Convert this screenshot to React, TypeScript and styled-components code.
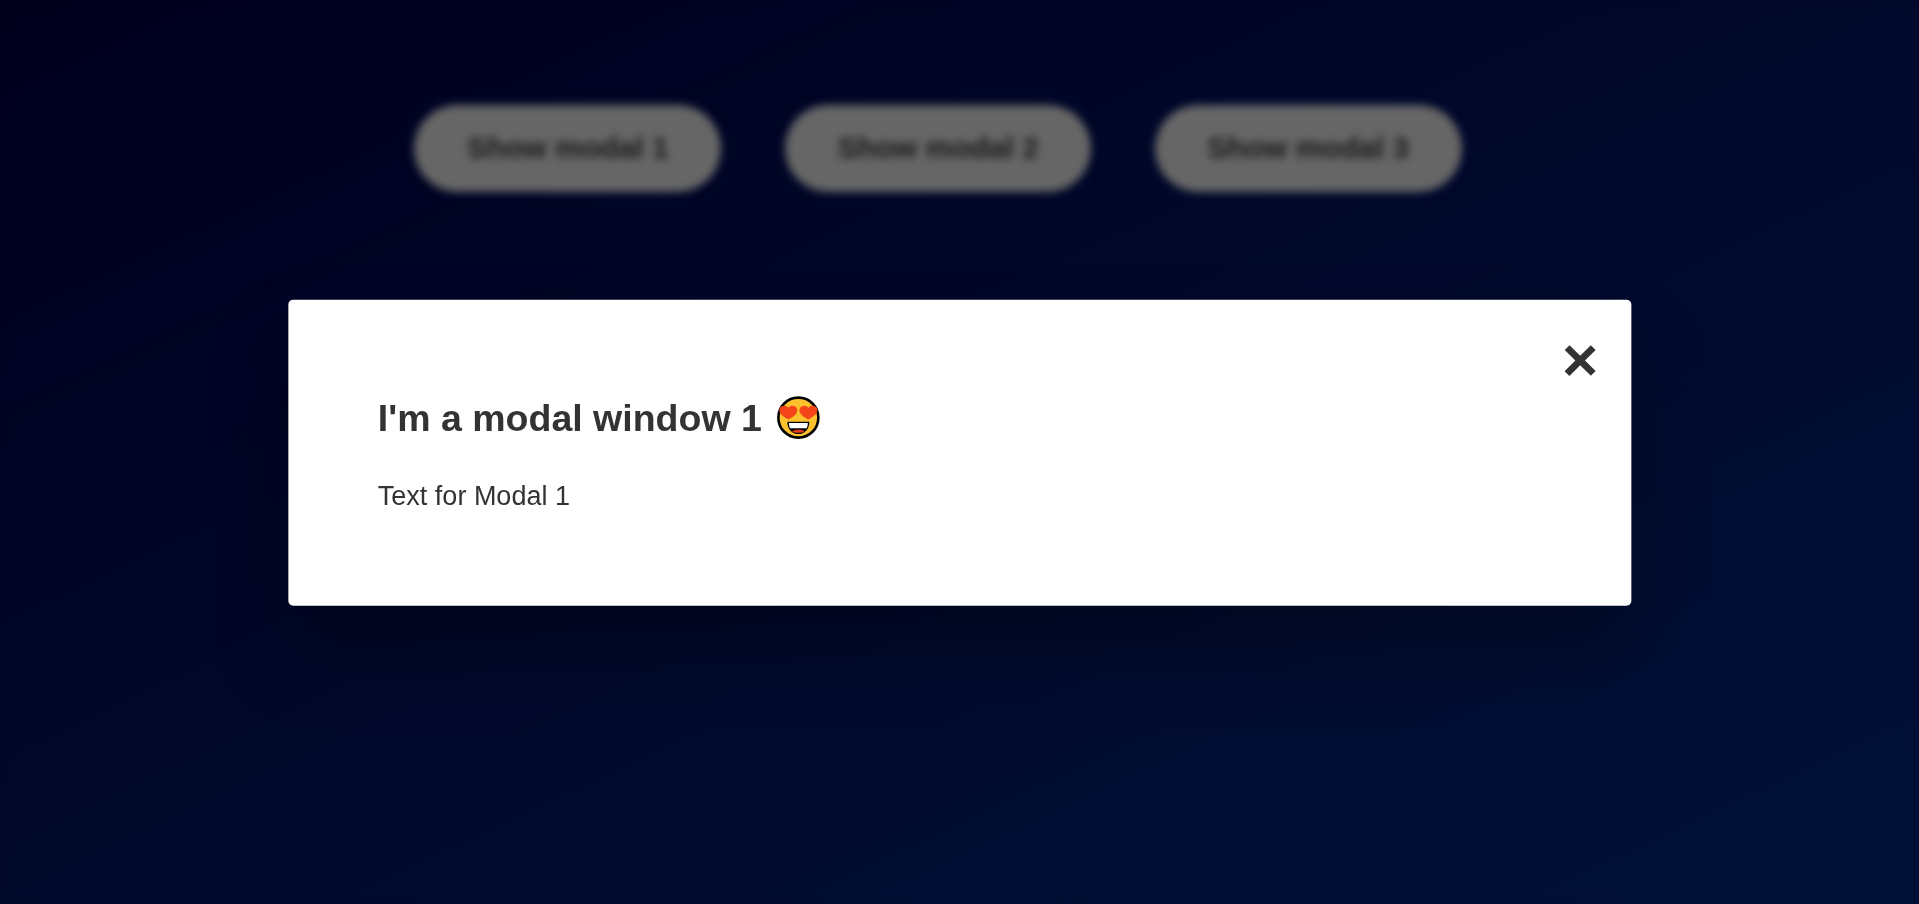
import React from "react";
import styled, { createGlobalStyle } from "styled-components";

const Global = createGlobalStyle`
  * { margin: 0; padding: 0; box-sizing: border-box; }
  html { font-size: 15px; }
  body {
    font-family: "Liberation Sans", Arial, sans-serif;
    color: #333;
    line-height: 1.5;
    height: 100vh;
    overflow: hidden;
  }
`;

const Page = styled.div`
  position: relative;
  height: 100vh;
  display: flex;
  align-items: flex-start;
  justify-content: center;
  gap: 63.5px;
  padding: 105px 43px 0 0;
  background: linear-gradient(to top left, #002a8c, #00004a);
`;

const ShowButton = styled.button`
  font-family: "Liberation Sans", Arial, sans-serif;
  font-size: 2rem;
  font-weight: 600;
  padding: 1.75rem 3.5rem;
  border: none;
  background: #fff;
  color: #444;
  border-radius: 10rem;
`;

const Overlay = styled.div`
  position: absolute;
  inset: 0;
  background: rgba(0, 0, 0, 0.6);
  backdrop-filter: blur(4px);
`;

const Modal = styled.div`
  position: absolute;
  top: calc(50% + 0.5px);
  left: 50%;
  transform: translate(-50%, -50%);
  width: 70%;
  padding: 6rem;
  border-radius: 5px;
  background: #fff;
  box-shadow: 0 3rem 5rem rgba(0, 0, 0, 0.3);
`;

const CloseButton = styled.button`
  position: absolute;
  top: 24px;
  right: 33px;
  font-family: "Liberation Sans", Arial, sans-serif;
  font-size: 62px;
  font-weight: 700;
  line-height: 1.15;
  color: #333;
  border: none;
  background: none;
`;

const Title = styled.h1`
  font-size: 2.5rem;
  font-weight: 700;
  margin-bottom: 2rem;
  display: flex;
  align-items: center;
  gap: 15px;
`;

const Body = styled.p`
  font-size: 1.8rem;
`;

const EmojiSvg = styled.svg`
  width: 44px;
  height: 44px;
  flex: none;
`;

const HeartEyes = () => (
  <EmojiSvg viewBox="0 0 44 44" role="img" aria-label="😍">
    <circle cx="22" cy="22" r="20" fill="#fcc22e" stroke="#000" strokeWidth="2.6" />
    <path
      d="M12 23.8 C6.5 21 2.8 18 3 14.2 C3.2 10.4 9 8.6 12 12 C15 8.6 20.6 10.2 20.9 14 C21.2 17.8 17.5 21 12 23.8 Z"
      fill="#f4451a"
    />
    <path
      d="M32 23.8 C37.5 21 41.2 18 41 14.2 C40.8 10.4 35 8.6 32 12 C29 8.6 23.4 10.2 23.1 14 C22.8 17.8 26.5 21 32 23.8 Z"
      fill="#f4451a"
    />
    <path d="M11 26 H33 C33.2 33.5 28 38.4 22 38.4 C16 38.4 10.8 33.5 11 26 Z" fill="#000" />
    <path d="M12.6 27.4 H31.4 C31.4 29.6 31 31.2 30.4 32.6 H13.6 C13 31.2 12.6 29.6 12.6 27.4 Z" fill="#fff" />
    <path d="M15.8 36 C17.5 33.4 26.5 33.4 28.2 36 C25.5 37.4 18.5 37.4 15.8 36 Z" fill="#e8391c" />
  </EmojiSvg>
);

export default function App() {
  return (
    <>
      <Global />
      <Page>
        <ShowButton>Show modal 1</ShowButton>
        <ShowButton>Show modal 2</ShowButton>
        <ShowButton>Show modal 3</ShowButton>
        <Overlay />
        <Modal>
          <CloseButton>×</CloseButton>
          <Title>
            I'm a modal window 1 <HeartEyes />
          </Title>
          <Body>Text for Modal 1</Body>
        </Modal>
      </Page>
    </>
  );
}
